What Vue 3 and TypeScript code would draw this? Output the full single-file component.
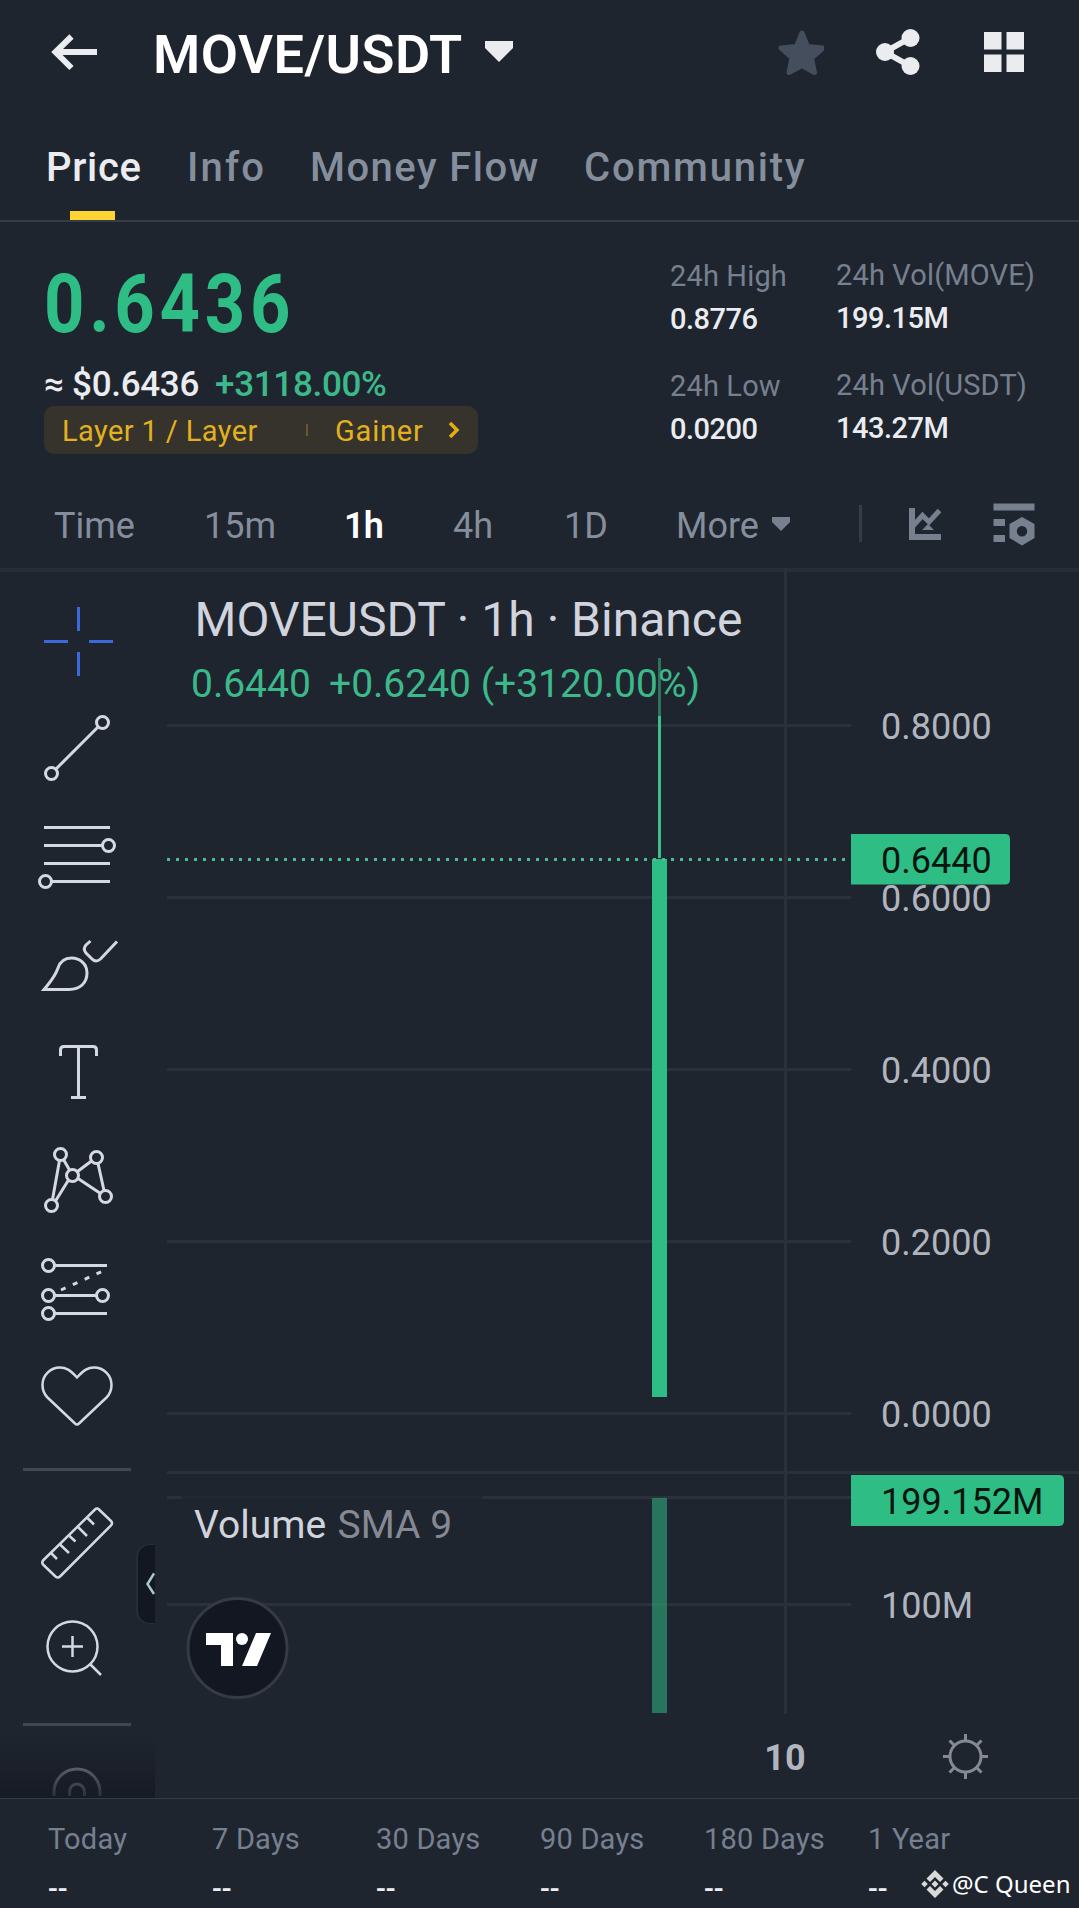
<script setup lang="ts">
interface Stat { label: string; value: string }
interface Level { y: number; label: string }

const tabs: string[] = ['Price', 'Info', 'Money Flow', 'Community']
const statsLeft: Stat[] = [
  { label: '24h High', value: '0.8776' },
  { label: '24h Low', value: '0.0200' },
]
const statsRight: Stat[] = [
  { label: '24h Vol(MOVE)', value: '199.15M' },
  { label: '24h Vol(USDT)', value: '143.27M' },
]
const intervals: string[] = ['Time', '15m', '1h', '4h', '1D']
const periods: string[] = ['Today', '7 Days', '30 Days', '90 Days', '180 Days', '1 Year']
const levels: Level[] = [
  { y: 725.5, label: '0.8000' },
  { y: 897.5, label: '0.6000' },
  { y: 1069.5, label: '0.4000' },
  { y: 1241.5, label: '0.2000' },
  { y: 1413.5, label: '0.0000' },
]
</script>

<template>
  <div class="screen">
    <header class="header">
      <svg class="back" width="48" height="40" viewBox="50 32 48 40">
        <path d="M97 52H55M71.500 36.500L55.500 52L71.500 68" fill="none" stroke="#eaecef" stroke-width="6" />
      </svg>
      <h1 class="pair">MOVE/USDT</h1>
      <svg class="pair-caret" width="28" height="22" viewBox="0 0 28 22"><path d="M0 0H28V7L14 21L0 7Z" fill="#eaecef" /></svg>
      <svg class="star" width="46" height="48" viewBox="778 28 46 48">
        <path d="M802 33L807.500 46.500L823 48L811.500 58L814.500 72.500L802 65.500L789 72.500L792 58L781 48L796.500 46.500Z" fill="#454e5c" stroke="#454e5c" stroke-width="5" stroke-linejoin="round" />
      </svg>
      <svg class="share" width="44" height="48" viewBox="876 28 44 48">
        <path d="M910 38L885 52L910 66" fill="none" stroke="#eaecef" stroke-width="6" />
        <circle cx="910.500" cy="38" r="9" fill="#eaecef" /><circle cx="885" cy="52" r="9" fill="#eaecef" /><circle cx="910.500" cy="66" r="9" fill="#eaecef" />
      </svg>
      <svg class="apps" width="40" height="40" viewBox="0 0 40 40"><path d="M0 0H17.500V17.500H0ZM22.500 0H40V17.500H22.500ZM0 22.500H17.500V40H0ZM22.500 22.500H40V40H22.500Z" fill="#eaecef" /></svg>
    </header>

    <nav class="tabs">
      <span v-for="(t, i) in tabs" :key="t" class="tab" :class="['tab-' + i, { active: i === 0 }]">{{ t }}</span>
    </nav>

    <section class="summary">
      <div class="quote">
        <div class="last">0.6436</div>
        <div class="sub"><span class="usd">≈ $0.6436</span><span class="pct">+3118.00%</span></div>
        <div class="tag">
          <span class="tag-a">Layer 1 / Layer</span>
          <i class="tag-sep"></i>
          <span class="tag-b">Gainer</span>
          <svg width="12" height="18" viewBox="0 0 12 18"><path d="M2 2L9 9L2 16" fill="none" stroke="#e3ad14" stroke-width="3.500" /></svg>
        </div>
      </div>
      <dl class="stats">
        <div v-for="s in statsLeft" :key="s.label" class="stat"><dt>{{ s.label }}</dt><dd>{{ s.value }}</dd></div>
      </dl>
      <dl class="stats wide">
        <div v-for="s in statsRight" :key="s.label" class="stat"><dt>{{ s.label }}</dt><dd>{{ s.value }}</dd></div>
      </dl>
    </section>

    <nav class="intervals">
      <span v-for="(t, i) in intervals" :key="t" :class="['int-' + i, { on: t === '1h' }]">{{ t }}</span>
      <span class="more">More</span>
      <svg width="18" height="14" viewBox="0 0 18 14"><path d="M0 0H18V5L9 14L0 5Z" fill="#76808f" /></svg>
      <i class="vsep"></i>
      <svg width="34" height="34" viewBox="907 506 34 34">
        <path d="M908 507H914V533H940V539H908Z" fill="#76808f" />
        <path d="M912 525L921.500 514.500L928 521L938.500 509.500" fill="none" stroke="#76808f" stroke-width="5" />
        <path d="M927 523L933 529H921Z" fill="#76808f" />
      </svg>
      <svg width="42" height="44" viewBox="993 502 42 44">
        <path d="M993.500 503.500H1034.500V510.500H993.500ZM993.500 519H1005V526H993.500ZM993.500 535H1005V542H993.500Z" fill="#76808f" />
        <path fill-rule="evenodd" d="M1022 517L1034.500 524V538L1022 545.500L1009.500 538V524ZM1022 526A5.200 5.200 0 1 0 1022 536.400A5.200 5.200 0 1 0 1022 526Z" fill="#76808f" />
      </svg>
    </nav>

    <main class="workspace">
      <aside class="tools">
        <svg width="155" height="124" viewBox="0 572 155 124">
          <path d="M78.500 607V631M78.500 652V676M44 641.500H68M89 641.500H113" class="cross" />
        </svg>
        <svg width="155" height="104" viewBox="0 696 155 104">
          <circle cx="51.500" cy="773.500" r="6" /><circle cx="102.500" cy="722.500" r="6" /><path d="M56 769L98 727" />
        </svg>
        <svg width="155" height="110" viewBox="0 800 155 110">
          <path d="M44 827.500H110M44 845.500H102M44 863.500H110M52 881.500H110" /><circle cx="108.500" cy="845.500" r="6" /><circle cx="45.500" cy="881.500" r="6" />
        </svg>
        <svg width="155" height="110" viewBox="0 910 155 110">
          <path d="M44 989.500H69C80 989.500 87 983 87 973C87 964 80 958 71.500 958C64 958 60 962 58 968C55 977 51 981 44 989.500Z" />
          <path d="M90.500 941L86 945Q82.500 949 86 953L92 959Q96 963 100.500 959L117 941.500" />
        </svg>
        <svg width="155" height="110" viewBox="0 1020 155 110">
          <path d="M60.500 1056V1050Q60.500 1046.500 64 1046.500H93Q96.500 1046.500 96.500 1050V1056M78.500 1046.500V1097.500M71 1097.500H86" />
        </svg>
        <svg width="155" height="110" viewBox="0 1130 155 110">
          <circle cx="60.500" cy="1154.500" r="6" /><circle cx="96.500" cy="1157.500" r="6" /><circle cx="72.500" cy="1175.500" r="6" /><circle cx="105.500" cy="1196.500" r="6" /><circle cx="51.500" cy="1205.500" r="6" />
          <path d="M59.500 1160.500L52.500 1199.500M63.500 1159.500L69.500 1170M77.500 1171.500L91.500 1161M98 1163.500L104 1190.500M78 1178.500L100.500 1193.500M68.500 1180L55.500 1201" />
        </svg>
        <svg width="155" height="104" viewBox="0 1240 155 104">
          <circle cx="48.500" cy="1265.500" r="6" /><circle cx="48.500" cy="1295.500" r="6" /><circle cx="48.500" cy="1313.500" r="6" /><circle cx="102.500" cy="1295.500" r="6" />
          <path d="M55 1265.500H107M55 1295.500H96M55 1313.500H107" /><path d="M61 1290L103 1271" stroke-dasharray="5 8" />
        </svg>
        <svg width="155" height="124" viewBox="0 1344 155 124">
          <path d="M77 1377.500C70 1370 66 1367.500 60 1367.500A17.500 17.500 0 0 0 42.500 1385C42.500 1390 44 1394 47.500 1397.500L75 1423.500Q77 1425.500 79 1423.500L106.500 1397.500C110 1394 111.500 1390 111.500 1385A17.500 17.500 0 0 0 94 1367.500C88 1367.500 84 1370 77 1377.500Z" stroke-width="2.500" />
        </svg>
        <i class="rule"></i>
        <svg width="155" height="135" viewBox="0 1471 155 135">
          <path d="M95 1509.500Q97 1507.500 99 1509.500L111 1521Q113 1523 111 1525.500L60 1576.500Q58 1578.500 55.500 1576.500L43.500 1565Q41 1562.500 43.500 1560Z" stroke-width="2.500" />
          <path d="M51 1553L57 1559M60 1544.500L69 1553M69.500 1536L75.500 1541.500M78 1527L87 1536M87.500 1518L94 1524.500" stroke-width="2.500" />
        </svg>
        <svg width="155" height="117" viewBox="0 1606 155 117">
          <circle cx="72.500" cy="1646.500" r="25" stroke-width="2.500" /><path d="M62 1646.500H83M72.500 1636V1657M90 1664L101 1675" stroke-width="2.500" />
        </svg>
        <i class="rule"></i>
        <div class="fade">
          <svg width="155" height="62" viewBox="0 1736 155 62">
            <path d="M54 1796V1792A23 23 0 0 1 100 1792V1796M69.500 1796V1792A7.500 8 0 0 1 84.500 1792V1796" />
          </svg>
        </div>
        <div class="handle">
          <svg width="17" height="78" viewBox="138 1545 17 78"><path d="M154 1573.500L147.500 1584L154 1594" stroke="#a9c6cb" stroke-width="2.500" /></svg>
        </div>
      </aside>

      <svg class="chart" width="924" height="1226" viewBox="155 572 924 1226">
        <g class="grid">
          <path v-for="l in levels" :key="l.label" :d="`M167 ${l.y}H851`" />
          <path d="M167 1472.500H1079M167 1604.500H851M785.500 568V1714" />
          <path d="M167 1497.500H181M483 1497.500H851" /><path d="M181 1497.500H483" opacity=".3" />
        </g>
        <rect x="658" y="658" width="3" height="200" fill="#3cbf8b" />
        <rect x="652" y="859" width="15" height="538" fill="#2ebd85" />
        <rect x="652" y="1498" width="15" height="215" fill="#2ebd85" opacity=".53" />
        <path d="M167 859.500H851" stroke="#4cbd92" stroke-width="3" stroke-dasharray="3 6" />
        <rect x="190" y="594" width="560" height="122" fill="#1f252f" opacity=".5" />
        <text x="194.500" y="635.700" class="sym">MOVEUSDT · 1h · Binance</text>
        <text x="191" y="697" class="chg">0.6440</text>
        <text x="329" y="697" class="chg">+0.6240 (+3120.00%)</text>
        <g class="axis">
          <text v-for="l in levels" :key="l.label" x="881" :y="l.y + 13">{{ l.label }}</text>
          <text x="881" y="1618">100M</text>
        </g>
        <path d="M851 834H1005Q1010 834 1010 839V879.500Q1010 884.500 1005 884.500H851Z" fill="#2ebd85" />
        <text x="881" y="872.500" class="tagtext">0.6440</text>
        <path d="M851 1475H1059Q1064 1475 1064 1480V1521Q1064 1526 1059 1526H851Z" fill="#2ebd85" />
        <text x="881" y="1513.700" class="tagtext">199.152M</text>
        <text x="194" y="1537.700" class="vol">Volume</text>
        <text x="337.500" y="1537.700" class="vol sma">SMA 9</text>
        <circle cx="237.500" cy="1648" r="49.500" fill="#131722" stroke="#363a45" stroke-width="3" />
        <path d="M206 1633H233V1666H221V1645H206ZM256 1633H271L257 1666H242Z" fill="#fff" /><circle cx="242" cy="1639" r="6" fill="#fff" />
        <text x="785" y="1770" class="day">10</text>
        <g class="sun">
          <circle cx="965.500" cy="1756.500" r="15.500" />
          <path d="M965.500 1741V1734M965.500 1772V1779M950 1756.500H943M981 1756.500H988M954.500 1745.500L949.500 1740.500M976.500 1745.500L981.500 1740.500M954.500 1767.500L949.500 1772.500M976.500 1767.500L981.500 1772.500" />
        </g>
      </svg>
    </main>

    <footer class="periods">
      <div v-for="p in periods" :key="p" class="period"><span>{{ p }}</span><b>--</b></div>
      <div class="mark">
        <svg width="28" height="28" viewBox="-14 -14 28 28">
          <path d="M0 -14L8.500 -5.500L5 -2L0 -7L-5 -2L-8.500 -5.500ZM0 14L8.500 5.500L5 2L0 7L-5 2L-8.500 5.500ZM0 -3.500L3.500 0L0 3.500L-3.500 0ZM-10.500 -3.300L-7.200 0L-10.500 3.300L-13.800 0ZM10.500 -3.300L13.800 0L10.500 3.300L7.200 0Z" fill="#d9d9d9" />
        </svg>
        <span>@C Queen</span>
      </div>
    </footer>
  </div>
</template>

<style>
body { background: #1f252f; overflow: hidden; }
</style>

<style scoped>
.screen { width: 1079px; height: 1908px; overflow: hidden; background: #1f252f; font-family: Roboto, "Liberation Sans", sans-serif; color: #eaecef; white-space: nowrap; display: flex; flex-direction: column; }
svg { display: block; flex: none; }
.header { height: 104px; display: flex; align-items: center; flex: none; }
.back { margin-left: 50px; }
.pair { margin: 5px 0 0 55px; width: 332px; font-size: 54px; line-height: 64px; font-weight: 600; color: #fff; letter-spacing: 0.5px; }
.star { margin-left: 265px; }
.share { margin-left: 52px; }
.apps { margin-left: 64px; }
.tabs { height: 116px; border-bottom: 2px solid #353c47; display: grid; grid-template-columns: 141px 123px 274px 1fr; padding-left: 46px; flex: none; }
.tab { font-size: 40px; line-height: 60px; padding-top: 34px; height: 82px; color: #848e9c; font-weight: 500; position: relative; letter-spacing: 1.45px; }
.tab.tab-1 { letter-spacing: 2.2px; }
.tab.tab-3 { letter-spacing: 1.8px; }
.tab.active { color: #eaecef; letter-spacing: .7px; }
.tab.active::after { content: ""; position: absolute; left: 24px; top: 107px; width: 45px; height: 9px; background: #fcd535; }
.summary { height: 252px; flex: none; display: grid; grid-template-columns: 626px 166px 1fr; padding-left: 44px; box-sizing: border-box; }
.last { width: 300px; font-size: 82px; line-height: 96px; padding-top: 34px; font-weight: 700; color: #2ebd85; transform: scaleX(.86); transform-origin: 0 0; letter-spacing: 5.5px; }
.sub { font-size: 35px; line-height: 40px; margin-top: 13px; font-weight: 500; display: flex; letter-spacing: -.3px; }
.usd { width: 171px; }
.pct { color: #3cb98a; }
.tag { margin-top: 1px; width: 434px; height: 48px; border-radius: 10px; background: #35332b; color: #e3b11f; font-size: 29px; line-height: 48px; display: flex; align-items: center; letter-spacing: .4px; }
.tag span { padding-top: 2px; }
.tag-a { margin-left: 18px; width: 244px; }
.tag-sep { width: 2px; height: 12px; background: #695829; margin-right: 27px; }
.tag-b { width: 113px; letter-spacing: .8px; }
.stats { margin: 0; padding-top: 33px; }
.stats.wide { padding-top: 31.500px; }
.stat { height: 110px; }
dt { font-size: 29px; line-height: 42px; color: #76808f; letter-spacing: .15px; }
dd { margin: 1px 0 0; font-size: 29px; line-height: 42px; font-weight: 500; letter-spacing: -.5px; }
.intervals { height: 94px; border-bottom: 4px solid #272d37; display: flex; align-items: center; color: #848e9c; font-size: 36px; line-height: 40px; flex: none; padding: 5px 0 0 54px; box-sizing: border-box; height: 98px; }
.intervals span { padding-top: 5px; }
.intervals .int-0 { width: 150px; }
.intervals .int-1 { width: 140px; }
.intervals .int-2 { width: 109px; }
.intervals .int-3 { width: 111px; }
.intervals .int-4 { width: 112px; }
.intervals .on { color: #fff; font-weight: 600; letter-spacing: -.8px; }
.more { width: 96px; }
.vsep { width: 3px; height: 37px; background: #353c47; margin: 0 46px 0 69px; }
.intervals svg:last-child { margin-left: 51px; }
.workspace { height: 1226px; display: flex; flex: none; }
.chart { overflow: visible; }
.tools { width: 155px; position: relative; display: flex; flex-direction: column; }
.tools svg { fill: none; stroke: #d5d8e2; stroke-width: 3; }
.tools .cross { stroke: #3c68dc; }
.rule { height: 3px; width: 108px; margin-left: 23px; background: #434651; flex: none; }
.fade { height: 62px; margin-top: 10px; background: linear-gradient(#1f252f, #161a25); flex: none; }
.tools .fade svg { stroke: #5a5e69; mask-image: linear-gradient(#000 50%, rgba(0, 0, 0, .3)); }
.handle { position: absolute; left: 138px; top: 973px; width: 17px; height: 78px; background: #131722; border-radius: 12px 0 0 12px; box-shadow: -1px 0 0 1px #272c37; clip-path: inset(-3px 0 -3px -3px); }
.grid path { stroke: #2b313b; stroke-width: 3; fill: none; }
.sym { font-size: 48px; fill: #d1d4dc; }
.chg { font-size: 39px; fill: #3cb98a; }
.axis { font-size: 36px; fill: #b2b5be; }
.tagtext { font-size: 36px; fill: #06150f; }
.vol { font-size: 39px; fill: #d1d4dc; }
.sma { fill: #868993; }
.day { font-size: 36px; font-weight: 700; fill: #b2b5be; text-anchor: middle; }
.sun { fill: none; stroke: #868993; stroke-width: 3; }
.periods { height: 110px; border-top: 1px solid #353b46; box-sizing: border-box; display: grid; grid-template-columns: repeat(6, 164px); padding-left: 48px; position: relative; flex: none; }
.period { display: flex; flex-direction: column; padding-top: 20px; }
.period span { font-size: 29px; line-height: 40px; color: #76808f; letter-spacing: .2px; }
.period b { font-size: 29px; line-height: 36px; margin-top: 12px; font-weight: 500; }
.mark { position: absolute; left: 921px; top: 70px; display: flex; align-items: center; gap: 3px; font: 24px/30px "Noto Sans", sans-serif; color: #fff; }
</style>
